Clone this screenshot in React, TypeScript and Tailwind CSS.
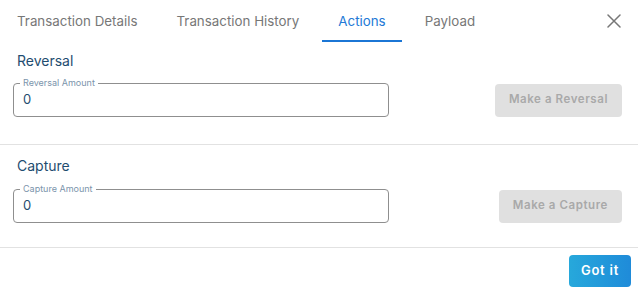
import React from "react";

function Field({ label, value }: { label: string; value: string }) {
  return (
    <div className="relative w-[376px] h-[34px] rounded-[4px] border border-[#8f8f8f] flex items-center px-[9px]">
      <span className="absolute left-[6px] top-[-7px] bg-white px-[3px] text-[9px] leading-[12px] text-[#7b94ab]">
        {label}
      </span>
      <span className="text-[13px] text-[#1f4d70]">{value}</span>
    </div>
  );
}

export default function App() {
  const tabs = ["Transaction Details", "Transaction History", "Actions", "Payload"];
  return (
    <div className="w-[638px] h-[292px] bg-white font-['Inter','Liberation_Sans',sans-serif] overflow-hidden">
      <div className="flex h-[42px] items-stretch pl-px gap-[7px]">
        {tabs.map((t) => {
          const active = t === "Actions";
          return (
            <div
              key={t}
              className={`relative flex items-center px-4 pt-px text-[13.35px] ${
                active ? "text-[#2379d6]" : "text-[#777777]"
              }`}
            >
              {t}
              {active && (
                <span className="absolute left-0 right-0 bottom-0 h-[2px] bg-[#1b76d5]" />
              )}
            </div>
          );
        })}
        <div className="ml-auto mr-[17px] flex items-center">
          <svg width="14" height="14" viewBox="0 0 14 14" className="mb-[1px]">
            <path d="M1 1L13 13M13 1L1 13" stroke="#777777" strokeWidth="1.5" strokeLinecap="round" />
          </svg>
        </div>
      </div>

      <div className="h-[103px] border-b border-[#e2e2e2] px-[13px] pt-[9px]">
        <div className="pl-[4px] text-[14px] leading-[20px] text-[#1f4d70]">Reversal</div>
        <div className="mt-[12px] flex items-center justify-between pr-[3px]">
          <Field label="Reversal Amount" value="0" />
          <button className="h-[33px] px-[14px] rounded-[4px] bg-[#e0e0e0] text-[11.5px] font-semibold tracking-[0.05em] text-[#a9a9a9]">
            Make a Reversal
          </button>
        </div>
      </div>

      <div className="h-[103px] border-b border-[#e2e2e2] px-[13px] pt-[11px]">
        <div className="pl-[4px] text-[14px] leading-[20px] text-[#1f4d70]">Capture</div>
        <div className="mt-[13px] flex items-center justify-between pr-[3px]">
          <Field label="Capture Amount" value="0" />
          <button className="h-[33px] px-[14px] rounded-[4px] bg-[#e0e0e0] text-[11.5px] font-semibold tracking-[0.05em] text-[#a9a9a9]">
            Make a Capture
          </button>
        </div>
      </div>

      <div className="flex justify-end pr-[7px] pt-[7px]">
        <button className="h-[32px] w-[62px] rounded-[4px] bg-gradient-to-r from-[#27a8db] to-[#1f8bd9] text-[13px] font-semibold tracking-[0.06em] text-white">
          Got it
        </button>
      </div>
    </div>
  );
}
